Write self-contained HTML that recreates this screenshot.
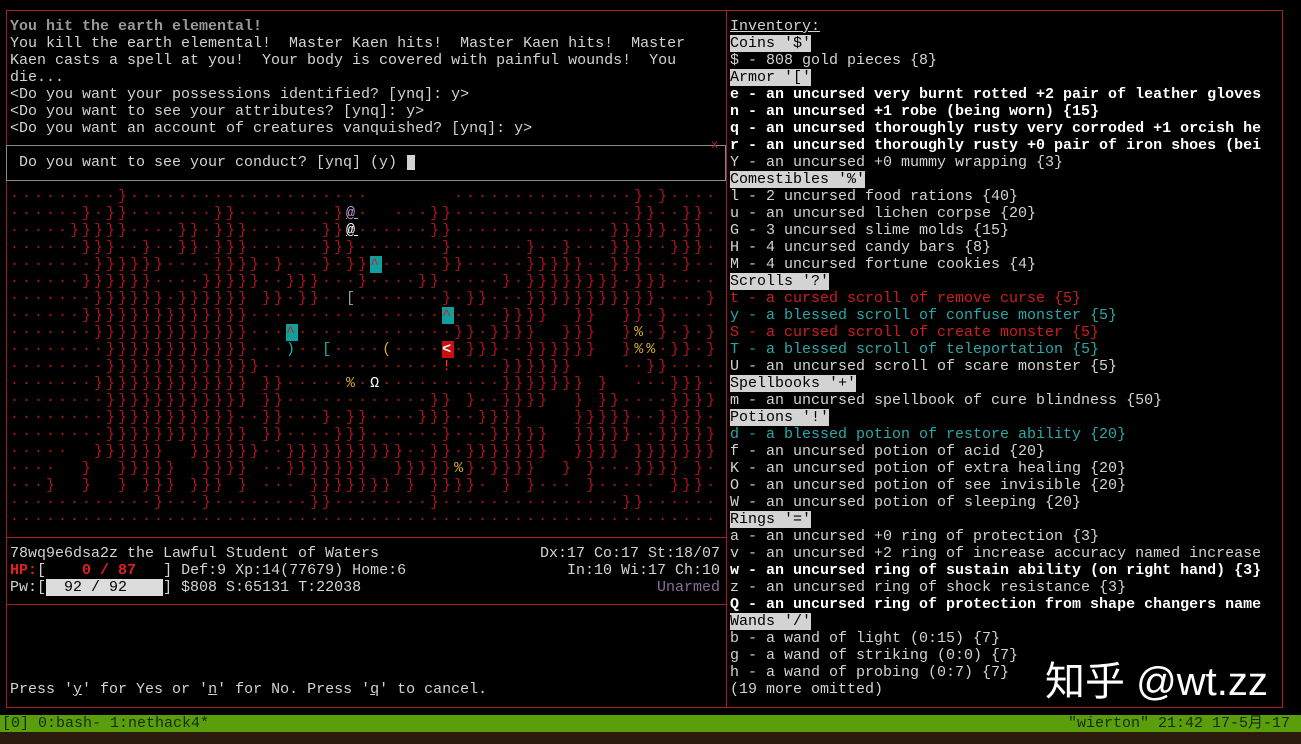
<!DOCTYPE html>
<html><head><meta charset="utf-8">
<style>
html,body{margin:0;padding:0;}
body{width:1301px;height:744px;background:#000;position:relative;overflow:hidden;font-family:"Liberation Mono","Noto Sans CJK SC",monospace;font-size:15px;color:#d3d3d3;}
.blk{position:absolute;line-height:17px;white-space:pre;}
.ln{position:absolute;background:#a82020;}
.map{position:absolute;left:10px;top:188px;width:712px;overflow:hidden;line-height:17px;white-space:pre;color:#b01818;letter-spacing:3px;}
.hd{background:#d3d3d3;color:#000;}
.b{font-weight:bold;color:#fff;}
.red{color:#cc1f1f;}
.cy{color:#2aa8a8;}
.cb{background:#119e9e;color:#d02020;}
.y{color:#d4aa30;}
.w{color:#fff;}
.g{color:#999;}
</style></head><body>
<div class="ln" style="left:6px;top:10px;width:1277px;height:1px"></div>
<div class="ln" style="left:6px;top:10px;width:1px;height:698px"></div>
<div class="ln" style="left:1282px;top:10px;width:1px;height:698px"></div>
<div class="ln" style="left:6px;top:707px;width:1277px;height:1px"></div>
<div class="ln" style="left:726px;top:10px;width:1px;height:698px"></div>
<div class="ln" style="left:6px;top:537px;width:720px;height:1px"></div>
<div class="ln" style="left:6px;top:604px;width:720px;height:1px"></div>

<div class="blk" style="left:10px;top:18px"><span style="color:#999;font-weight:bold">You hit the earth elemental!</span>
You kill the earth elemental!  Master Kaen hits!  Master Kaen hits!  Master
Kaen casts a spell at you!  Your body is covered with painful wounds!  You
die...
&lt;Do you want your possessions identified? [ynq]: y&gt;
&lt;Do you want to see your attributes? [ynq]: y&gt;
&lt;Do you want an account of creatures vanquished? [ynq]: y&gt;</div>

<div style="position:absolute;left:6px;top:145px;width:718px;height:34px;border:1px solid #8a8a8a;background:#000"></div>
<div class="blk" style="left:19px;top:154px">Do you want to see your conduct? [ynq] (y) </div>
<div style="position:absolute;left:407px;top:155px;width:8px;height:15px;background:#d3d3d3"></div>
<div class="blk" style="left:711px;top:137px;color:#c02020;font-size:12px">x</div>

<div class="map">·········}····················       ···············}·}····
······}·}}·······}}········}<span style="color:#c89ad4;text-decoration:underline">@</span>·  ···}}···············}}··}}·
·····}}}}}····}}·}}}······}}<span class="w" style="font-weight:bold;text-decoration:underline">@</span>······}}·············}}}}}·}}·
······}}}··}··}}·}}}······}}}·······}······}··}···}}}··}}}·
·······}}}}}}····}}}}·}···}·}}<span class="cb">^</span>·····}}·····}}}}}··}}}···}··
······}}}}}}····}}}}}··}}}···}····}}·····}·}}}}}}}}·}}}····
·······}}}}}}·}}}}}} }}·}}··<span class="g">[</span>·······}·}}···}}}}}}}}}}}····}
······}}}}}}}}}}}}}}················<span class="cb">^</span>····}}}}  }}  }}·}····
·······}}}}}}}}}}}}}···<span class="cb">^</span>·············}}·}}}}  }}}  }<span class="y">%</span>·}·}·}
········}}}}}}}}}}}}···<span class="cy">)</span>··<span class="cy">[</span>····<span class="y">(</span>····<span style="background:#c81010;color:#fff;font-weight:bold">&lt;</span>·}}}··}}}}}}  }<span class="y">%%</span>·}}·}
········}}}}}}}}}}}}}···············<span style="color:#ff3030">!</span>····}}}}}}    ··}}····
·······}}}}}}}}}}}}} }}·····<span class="y">%</span>·<span class="w">Ω</span>··········}}}}}}} }  ···}}}·
········}}}}}}}}}}}} }}············}} }··}}}}  } }}····}}}}
········}}}}}}}}}}}··}}···}·}}····}}}··}}}}    }}}}}··}}}}·
········}}}}}}}}}}}} }}····}}}······}···}}}}}  }}}}}··}}}}}
·····  }}}}}}  }}}}}}··}}}}}}}}}}··}}·}}}}}}}  }}}} }}}}}}}
····  }  }}}}}  }}}} ··}}}}}}}  }}}}}<span class="y">%</span>}·}}}}  } }···}}}} }·
···}  }  } }}} }}} } ··· }}}}}}} } }}}}· } }··· }····· }}}·
············}···}········}}········}···············}}······
···························································</div>

<div class="blk" style="left:10px;top:545px">78wq9e6dsa2z the Lawful Student of Waters
<span style="color:#e02020;font-weight:bold">HP:</span>[<span style="color:#e02020;font-weight:bold">    0 / 87   </span>] Def:9 Xp:14(77679) Home:6
Pw:[<span style="background:#dcdcdc;color:#000">  92 / 92    </span>] $808 S:65131 T:22038</div>
<div class="blk" style="left:540px;top:545px;width:180px;text-align:right">Dx:17 Co:17 St:18/07
In:10 Wi:17 Ch:10
<span style="color:#8a6f9a">Unarmed</span></div>

<div class="blk" style="left:10px;top:681px">Press '<u>y</u>' for Yes or '<u>n</u>' for No. Press '<u>q</u>' to cancel.</div>

<div class="blk" style="left:730px;top:18px;width:550px;overflow:hidden"><u>Inventory:</u>
<span class="hd">Coins '$'</span>
$ - 808 gold pieces {8}
<span class="hd">Armor '['</span>
<span class="b">e - an uncursed very burnt rotted +2 pair of leather gloves</span>
<span class="b">n - an uncursed +1 robe (being worn) {15}</span>
<span class="b">q - an uncursed thoroughly rusty very corroded +1 orcish he</span>
<span class="b">r - an uncursed thoroughly rusty +0 pair of iron shoes (bei</span>
Y - an uncursed +0 mummy wrapping {3}
<span class="hd">Comestibles '%'</span>
l - 2 uncursed food rations {40}
u - an uncursed lichen corpse {20}
G - 3 uncursed slime molds {15}
H - 4 uncursed candy bars {8}
M - 4 uncursed fortune cookies {4}
<span class="hd">Scrolls '?'</span>
<span class="red">t - a cursed scroll of remove curse {5}</span>
<span class="cy">y - a blessed scroll of confuse monster {5}</span>
<span class="red">S - a cursed scroll of create monster {5}</span>
<span class="cy">T - a blessed scroll of teleportation {5}</span>
U - an uncursed scroll of scare monster {5}
<span class="hd">Spellbooks '+'</span>
m - an uncursed spellbook of cure blindness {50}
<span class="hd">Potions '!'</span>
<span class="cy">d - a blessed potion of restore ability {20}</span>
f - an uncursed potion of acid {20}
K - an uncursed potion of extra healing {20}
O - an uncursed potion of see invisible {20}
W - an uncursed potion of sleeping {20}
<span class="hd">Rings '='</span>
a - an uncursed +0 ring of protection {3}
v - an uncursed +2 ring of increase accuracy named increase
<span class="b">w - an uncursed ring of sustain ability (on right hand) {3}</span>
z - an uncursed ring of shock resistance {3}
<span class="b">Q - an uncursed ring of protection from shape changers name</span>
<span class="hd">Wands '/'</span>
b - a wand of light (0:15) {7}
g - a wand of striking (0:0) {7}
h - a wand of probing (0:7) {7}
(19 more omitted)</div>

<div style="position:absolute;left:1045px;top:659px;font-family:'Liberation Sans','Noto Sans CJK SC',sans-serif;font-size:40px;line-height:46px;color:#fff;white-space:pre">知乎 @wt.zz</div>

<div style="position:absolute;left:0;top:715px;width:1301px;height:17px;background:#5a9e0c"></div>
<div class="blk" style="left:2px;top:715px;color:#1a2a08">[0] 0:bash- 1:nethack4*</div>
<div class="blk" style="left:1000px;top:715px;width:290px;text-align:right;color:#1a2a08">"wierton" 21:42 17-5月-17</div>
<div style="position:absolute;left:0;top:732px;width:1301px;height:12px;background:#2b1a0e"></div>
</body></html>
